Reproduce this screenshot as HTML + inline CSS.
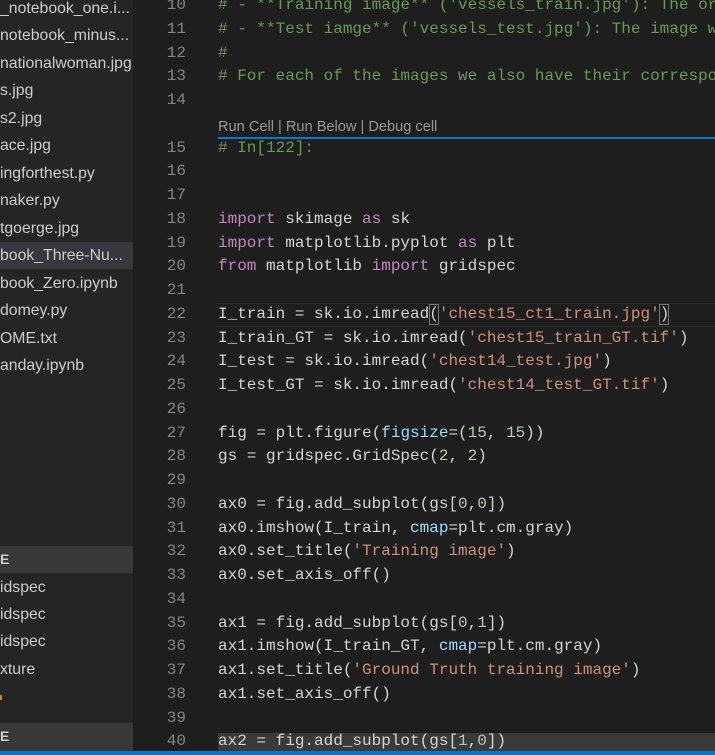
<!DOCTYPE html>
<html><head><meta charset="utf-8"><style>
html,body{margin:0;width:715px;height:755px;overflow:hidden}
body{background:#1e1e1e;position:relative;font-family:"Liberation Sans",sans-serif}
#side{position:absolute;left:0;top:0;width:133px;height:751px;background:#252526;overflow:hidden}
#ed{position:absolute;left:133px;top:0;width:582px;height:751px;overflow:hidden}
.it{position:absolute;left:0;height:27px;line-height:27px;font-size:15.8px;color:#cccccc;white-space:nowrap;width:133px;overflow:hidden}
.hd{position:absolute;left:0;width:133px;background:#383838;color:#cccccc;font-weight:bold;font-size:14px;line-height:27px}
#status{position:absolute;left:0;top:751px;width:715px;height:4px;background:#007acc}
.ln{position:absolute;left:7px;width:46px;text-align:right;font-family:"Liberation Mono",monospace;font-size:16px;color:#858585;height:23.75px;line-height:23.75px}
.cd{position:absolute;left:85px;font-family:"Liberation Mono",monospace;font-size:16px;color:#d4d4d4;white-space:pre;height:23.75px;line-height:23.75px}
.c{color:#6a9955}.k{color:#c586c0}.s{color:#ce9178}.n{color:#b5cea8}.p{color:#9cdcfe}
</style></head><body>
<div id="side">
<div class="it" style="top:-5px">_notebook_one.i...</div>
<div class="it" style="top:22px">notebook_minus...</div>
<div class="it" style="top:50px">nationalwoman.jpg</div>
<div class="it" style="top:77px">s.jpg</div>
<div class="it" style="top:105px">s2.jpg</div>
<div class="it" style="top:132px">ace.jpg</div>
<div class="it" style="top:160px">ingforthest.py</div>
<div class="it" style="top:187px">naker.py</div>
<div class="it" style="top:215px">tgoerge.jpg</div>
<div class="it" style="top:242px;background:#37373d">book_Three-Nu...</div>
<div class="it" style="top:270px">book_Zero.ipynb</div>
<div class="it" style="top:297px">domey.py</div>
<div class="it" style="top:325px">OME.txt</div>
<div class="it" style="top:352px">anday.ipynb</div>
<div class="hd" style="top:546px;height:27px">E</div>
<div class="it" style="top:574px">idspec</div>
<div class="it" style="top:601px">idspec</div>
<div class="it" style="top:628px">idspec</div>
<div class="it" style="top:656px">xture</div>
<div style="position:absolute;left:0;top:695px;width:2px;height:5px;background:#d18616"></div>
<div class="hd" style="top:723px;height:28px">E</div>
</div>

<div id="ed">
<div style="position:absolute;left:85px;top:137px;width:497px;height:2px;background:#007acc"></div>
<div style="position:absolute;left:85px;top:117px;font-size:14.6px;color:#999999;line-height:20px;white-space:nowrap">Run Cell | Run Below | Debug cell</div>
<div style="position:absolute;left:83px;top:303px;width:499px;height:22px;border-top:1px solid #2c2c2c;border-bottom:1px solid #2c2c2c"></div>
<div style="position:absolute;left:296px;top:304px;width:10px;height:21px;border:1px solid #777;box-sizing:border-box"></div>
<div style="position:absolute;left:526px;top:304px;width:10px;height:21px;border:1px solid #777;box-sizing:border-box"></div>
<div style="position:absolute;left:85px;top:733px;width:497px;height:18px;background:#3a3a3a"></div>

<div class="ln" style="top:-6px">10</div><div class="cd c" style="top:-6px"># - **Training image** ('vessels_train.jpg'): The or</div>
<div class="ln" style="top:17.75px">11</div><div class="cd c" style="top:17.75px"># - **Test iamge** ('vessels_test.jpg'): The image w</div>
<div class="ln" style="top:41.5px">12</div><div class="cd c" style="top:41.5px">#</div>
<div class="ln" style="top:65.25px">13</div><div class="cd c" style="top:65.25px"># For each of the images we also have their correspo</div>
<div class="ln" style="top:89px">14</div>
<div class="ln" style="top:136.5px">15</div><div class="cd c" style="top:136.5px"># In[122]:</div>
<div class="ln" style="top:160.25px">16</div>
<div class="ln" style="top:184px">17</div>
<div class="ln" style="top:207.75px">18</div><div class="cd" style="top:207.75px"><span class="k">import</span> skimage <span class="k">as</span> sk</div>
<div class="ln" style="top:231.5px">19</div><div class="cd" style="top:231.5px"><span class="k">import</span> matplotlib.pyplot <span class="k">as</span> plt</div>
<div class="ln" style="top:255.25px">20</div><div class="cd" style="top:255.25px"><span class="k">from</span> matplotlib <span class="k">import</span> gridspec</div>
<div class="ln" style="top:279px">21</div>
<div class="ln" style="top:302.75px">22</div><div class="cd" style="top:302.75px">I_train = sk.io.imread(<span class="s">'chest15_ct1_train.jpg'</span>)</div>
<div class="ln" style="top:326.5px">23</div><div class="cd" style="top:326.5px">I_train_GT = sk.io.imread(<span class="s">'chest15_train_GT.tif'</span>)</div>
<div class="ln" style="top:350.25px">24</div><div class="cd" style="top:350.25px">I_test = sk.io.imread(<span class="s">'chest14_test.jpg'</span>)</div>
<div class="ln" style="top:374px">25</div><div class="cd" style="top:374px">I_test_GT = sk.io.imread(<span class="s">'chest14_test_GT.tif'</span>)</div>
<div class="ln" style="top:397.75px">26</div>
<div class="ln" style="top:421.5px">27</div><div class="cd" style="top:421.5px">fig = plt.figure(<span class="p">figsize</span>=(<span class="n">15</span>, <span class="n">15</span>))</div>
<div class="ln" style="top:445.25px">28</div><div class="cd" style="top:445.25px">gs = gridspec.GridSpec(<span class="n">2</span>, <span class="n">2</span>)</div>
<div class="ln" style="top:469px">29</div>
<div class="ln" style="top:492.75px">30</div><div class="cd" style="top:492.75px">ax0 = fig.add_subplot(gs[<span class="n">0</span>,<span class="n">0</span>])</div>
<div class="ln" style="top:516.5px">31</div><div class="cd" style="top:516.5px">ax0.imshow(I_train, <span class="p">cmap</span>=plt.cm.gray)</div>
<div class="ln" style="top:540.25px">32</div><div class="cd" style="top:540.25px">ax0.set_title(<span class="s">'Training image'</span>)</div>
<div class="ln" style="top:564px">33</div><div class="cd" style="top:564px">ax0.set_axis_off()</div>
<div class="ln" style="top:587.75px">34</div>
<div class="ln" style="top:611.5px">35</div><div class="cd" style="top:611.5px">ax1 = fig.add_subplot(gs[<span class="n">0</span>,<span class="n">1</span>])</div>
<div class="ln" style="top:635.25px">36</div><div class="cd" style="top:635.25px">ax1.imshow(I_train_GT, <span class="p">cmap</span>=plt.cm.gray)</div>
<div class="ln" style="top:659px">37</div><div class="cd" style="top:659px">ax1.set_title(<span class="s">'Ground Truth training image'</span>)</div>
<div class="ln" style="top:682.75px">38</div><div class="cd" style="top:682.75px">ax1.set_axis_off()</div>
<div class="ln" style="top:706.5px">39</div>
<div class="ln" style="top:730.25px">40</div><div class="cd" style="top:730.25px">ax2 = fig.add_subplot(gs[<span class="n">1</span>,<span class="n">0</span>])</div>
</div>
<div id="status"></div>
</body></html>
